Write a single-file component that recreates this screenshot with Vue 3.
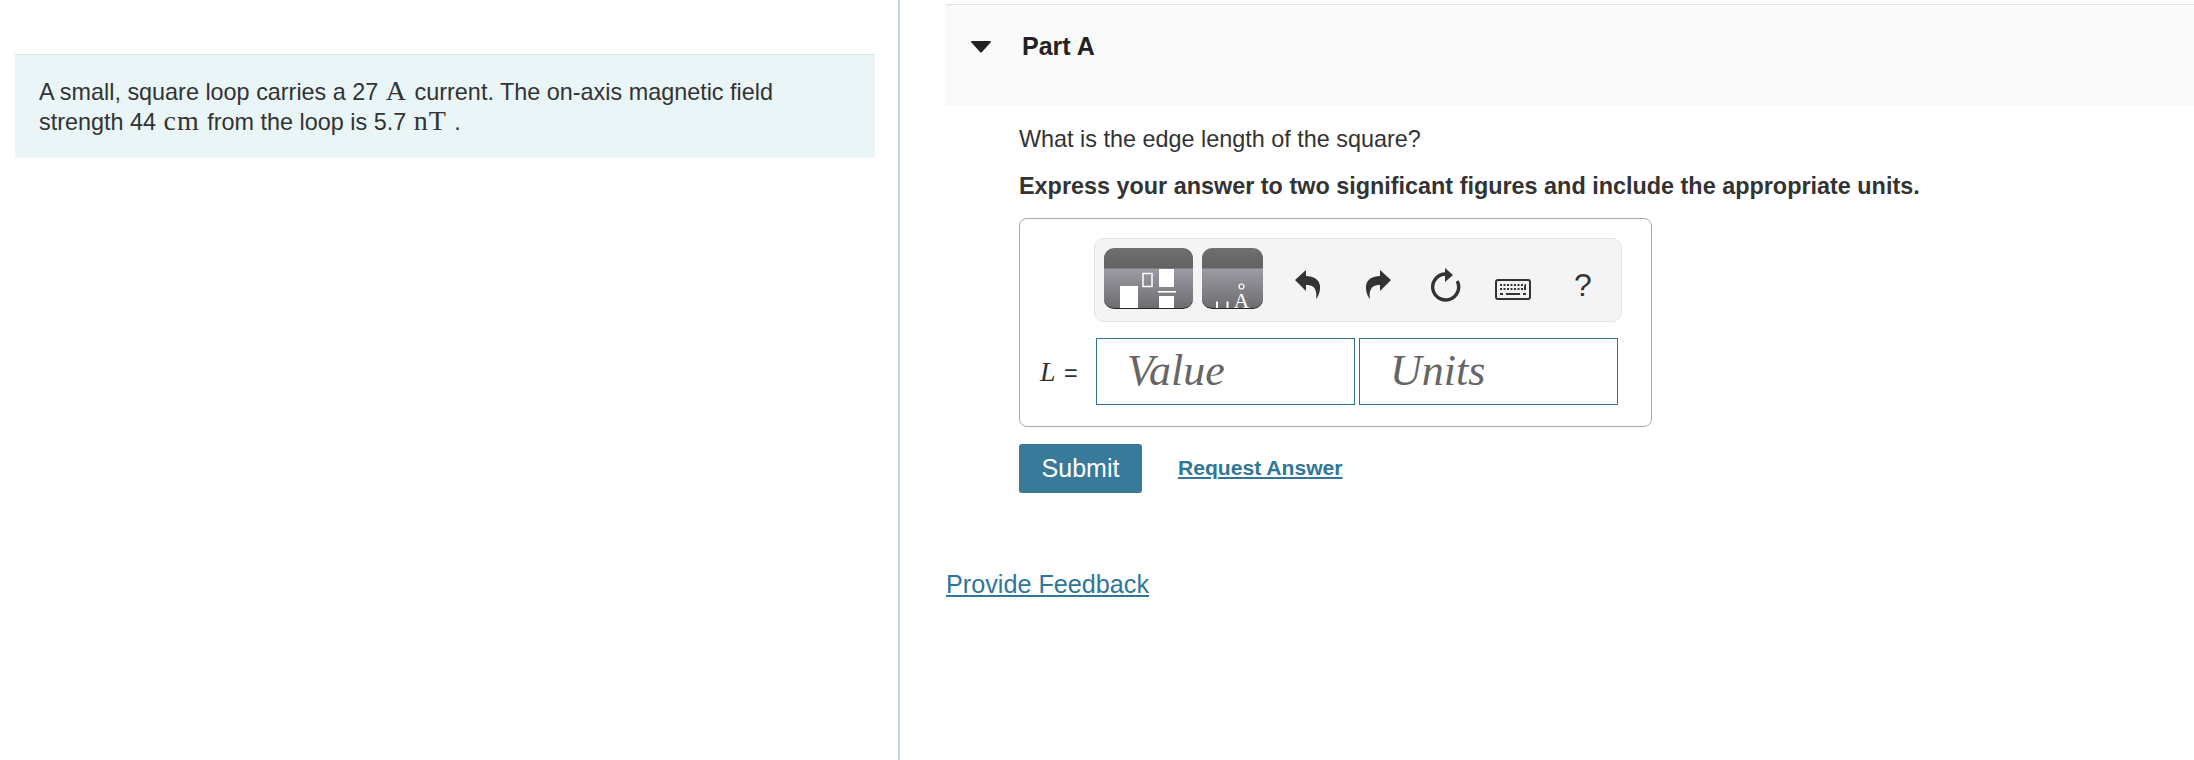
<template>
  <div class="page">
    <div class="left-col">
      <div class="intro">
        A small, square loop carries a 27 <span class="math">A</span> current. The on-axis magnetic field
        strength 44 <span class="math">cm</span> from the loop is 5.7 <span class="math">nT</span> .
      </div>
    </div>

    <div class="right-col">
      <div class="part-header">
        <svg class="caret" width="20" height="12" viewBox="0 0 20 12"><path d="M0 1Q0 0 1 0H19Q20 0 20 1L11 11Q10 12 9 11Z" fill="#222" /></svg>
        <span class="part-title">Part A</span>
      </div>

      <div class="part-body">
        <p class="question">What is the edge length of the square?</p>
        <p class="instruction">Express your answer to two significant figures and include the appropriate units.</p>

        <div class="answer-box">
          <div class="toolbar">
            <button class="tpl-btn tpl-wide">
              <svg width="89" height="60" viewBox="0 0 89 60">
                <rect x="16" y="38" width="18" height="22" fill="#fff" />
                <rect x="39" y="25.500" width="9" height="13" fill="none" stroke="#fff" stroke-width="1.500" />
                <rect x="55" y="21" width="15" height="18" fill="#fff" />
                <rect x="54" y="43" width="18" height="1.600" fill="#fff" />
                <rect x="55" y="48" width="15" height="12" fill="#fff" />
              </svg>
            </button>
            <button class="tpl-btn tpl-narrow">
              <svg width="61" height="60" viewBox="0 0 61 60">
                <rect x="14" y="53.500" width="2" height="6.500" fill="#fff" />
                <rect x="24.500" y="53.500" width="2" height="6.500" fill="#fff" />
                <circle cx="39.500" cy="38.500" r="2.500" fill="none" stroke="#fff" stroke-width="1.200" />
                <text x="39.500" y="60" class="unit-glyph" text-anchor="middle">A</text>
              </svg>
            </button>
            <svg class="tool undo" width="25" height="29" viewBox="0 0 25 29"><path d="M0 10L11 0V6C20 6 26 11 25 19C24.600 23 23 27 21 29C22 24 21 20 19 17.500C17 15.500 14 15 11 15V21Z" fill="#333" /></svg>
            <svg class="tool redo" width="25" height="29" viewBox="0 0 25 29"><path d="M25 10L14 0V6C5 6 -1 11 0 19C0.400 23 2 27 4 29C3 24 4 20 6 17.500C8 15.500 11 15 14 15V21Z" fill="#333" /></svg>
            <svg class="tool reset" width="31" height="34" viewBox="0 0 31 34">
              <path d="M27.200 13A13 13 0 1 1 16 6" fill="none" stroke="#333" stroke-width="3.400" />
              <path d="M15 0L23 7L15 14Z" fill="#333" />
            </svg>
            <svg class="tool keys" width="36" height="21" viewBox="0 0 36 21">
              <rect x="1" y="1" width="34" height="19" rx="2" fill="none" stroke="#333" stroke-width="2" />
              <path d="M5 6H31" stroke="#333" stroke-width="2" stroke-dasharray="2 1.500" />
              <path d="M5 10H29" stroke="#333" stroke-width="2" stroke-dasharray="2 1.500" />
              <path d="M5 15H8M11 15H25M28 15H31" stroke="#333" stroke-width="2" />
              <path d="M30 7V11" stroke="#333" stroke-width="2" />
            </svg>
            <span class="help">?</span>
          </div>

          <div class="answer-row">
            <span class="var"><i>L</i> =</span>
            <div class="field">Value</div>
            <div class="field">Units</div>
          </div>
        </div>

        <div class="actions">
          <button class="submit">Submit</button>
          <a class="request" href="#">Request Answer</a>
        </div>
      </div>

      <a class="feedback" href="#">Provide Feedback</a>
    </div>
  </div>
</template>

<script setup>
</script>

<style>
html, body { margin: 0; background: #fff; overflow: hidden; }
</style>

<style scoped>
.page {
  display: flex;
  height: 760px;
  font-family: "Liberation Sans", Arial, sans-serif;
  color: #333;
}

.left-col {
  width: 900px;
  box-sizing: border-box;
  flex-shrink: 0;
  border-right: 2px solid #c6d5e4;
  padding: 54px 23px 0 15px;
}

.intro {
  background: #e9f5f7;
  border-top: 1px solid #d8e4e6;
  height: 104px;
  box-sizing: border-box;
  padding: 22px 24px 0;
  font-size: 23.400px;
  line-height: 28.500px;
}

.math {
  font-family: "Liberation Serif", serif;
  font-size: 28px;
  line-height: 1;
  letter-spacing: 1px;
  margin: 0 1px;
}

.right-col {
  flex: 1;
  min-width: 0;
  padding: 4px 0 0 46px;
}

.part-header {
  display: flex;
  align-items: flex-start;
  height: 102px;
  box-sizing: border-box;
  background: #f9f9f9;
  border-top: 1px solid #dbe2e8;
  padding-top: 26px;
  padding-left: 25px;
}

.caret { margin-top: 10px; }

.part-title {
  margin-left: 31px;
  font-size: 25px;
  font-weight: 700;
  line-height: 30px;
  color: #222;
}

.part-body { padding-left: 73px; }

.question {
  margin: 19px 0 0;
  font-size: 23.400px;
  line-height: 28px;
}

.instruction {
  margin: 19px 0 0;
  font-size: 23.400px;
  font-weight: 700;
  line-height: 28px;
}

.answer-box {
  width: 633px;
  height: 209px;
  box-sizing: border-box;
  margin-top: 18px;
  border: 1px solid #aaa;
  border-radius: 8px;
  padding-top: 19px;
}

.toolbar {
  display: flex;
  align-items: center;
  width: 528px;
  height: 84px;
  box-sizing: border-box;
  margin-left: 74px;
  background: #f4f4f4;
  border: 1px solid #e2e2e2;
  border-radius: 10px;
  padding-left: 9px;
}

.tpl-btn {
  display: block;
  height: 60px;
  padding: 0;
  margin-bottom: 4px;
  border: 0;
  border-radius: 10px;
  border-bottom: 1px solid #222;
  box-sizing: content-box;
  overflow: hidden;
  background: linear-gradient(#6f6f6f, #626262 20px, #9c9ba3 21px, #6d6d71);
}
.tpl-btn svg { display: block; }
.tpl-wide { width: 89px; margin-right: 9px; }
.tpl-narrow { width: 61px; margin-right: 32px; }

.unit-glyph {
  font-family: "Liberation Serif", serif;
  font-size: 22px;
  fill: #fff;
}

.tool { flex-shrink: 0; }
.undo { margin-right: 46px; margin-top: 9px; }
.redo { margin-right: 39px; margin-top: 9px; }
.reset { margin-right: 34px; margin-top: 10px; }
.keys { margin-right: 43px; margin-top: 19px; }

.help {
  margin-top: 9px;
  font-size: 32px;
  line-height: 32px;
  color: #333;
}

.answer-row {
  display: flex;
  align-items: center;
  margin-top: 16px;
}

.var {
  width: 56px;
  padding-left: 20px;
  font-size: 23.400px;
  word-spacing: 2px;
}
.var i {
  font-family: "Liberation Serif", serif;
  font-size: 28px;
}

.field {
  width: 259px;
  height: 67px;
  box-sizing: border-box;
  border: 1px solid #2e7396;
  margin-right: 4px;
  padding-left: 30px;
  font-family: "Liberation Serif", serif;
  font-style: italic;
  font-size: 44px;
  line-height: 63px;
  color: #666;
}

.actions {
  display: flex;
  align-items: center;
  margin-top: 17px;
}

.submit {
  width: 123px;
  height: 49px;
  padding: 0;
  border: 0;
  border-radius: 3px;
  background: #397a9b;
  color: #fff;
  font-family: inherit;
  font-size: 25px;
}

.request {
  margin-left: 36px;
  margin-top: -2px;
  color: #2f7699;
  font-size: 21.100px;
  font-weight: 700;
}

.feedback {
  display: inline-block;
  margin-top: 75px;
  color: #2f7699;
  font-size: 25.200px;
  line-height: 32px;
}
</style>
